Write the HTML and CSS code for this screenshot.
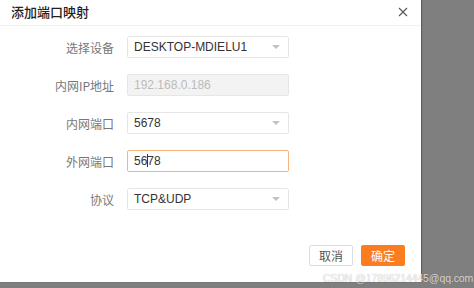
FILE: index.html
```html
<!DOCTYPE html>
<html lang="zh">
<head>
<meta charset="utf-8">
<link rel="stylesheet" href="styles.css">
</head>
<body>
<div class="stage">
  <div class="dialog">
    <div class="header">
      <span class="title">添加端口映射</span>
      <svg class="close" width="10" height="10" viewBox="0 0 10 10"><path d="M1 1L9 9M9 1L1 9" stroke="#555" stroke-width="1.1" fill="none"/></svg>
    </div>
    <div class="form">
      <div class="row">
        <label class="label">选择设备</label>
        <div class="field select"><span>DESKTOP-MDIELU1</span><i class="arrow"></i></div>
      </div>
      <div class="row">
        <label class="label">内网IP地址</label>
        <div class="field disabled"><span>192.168.0.186</span></div>
      </div>
      <div class="row">
        <label class="label">内网端口</label>
        <div class="field select"><span>5678</span><i class="arrow"></i></div>
      </div>
      <div class="row">
        <label class="label">外网端口</label>
        <div class="field focus"><span>56<b class="caret"></b>78</span></div>
      </div>
      <div class="row">
        <label class="label">协议</label>
        <div class="field select"><span>TCP&amp;UDP</span><i class="arrow"></i></div>
      </div>
    </div>
    <div class="footer">
      <button class="btn cancel">取消</button>
      <button class="btn ok">确定</button>
    </div>
  </div>
  <div class="watermark">CSDN @17896214445@qq.com</div>
</div>
</body>
</html>
```
FILE: styles.css
```css
html, body { margin: 0; padding: 0; }
body { font-family: "Liberation Sans", Arial, "Noto Sans CJK SC", sans-serif; }
.stage {
  position: relative;
  width: 474px;
  height: 288px;
  background: #7f7f7f;
  overflow: hidden;
}
.dialog {
  width: 421px;
  height: 282px;
  background: #fff;
  box-shadow: 1px 0 1px rgba(0,0,0,0.25);
  display: flex;
  flex-direction: column;
}
.header {
  height: 25px;
  border-bottom: 1px solid #f2f2f2;
  display: flex;
  align-items: center;
  justify-content: space-between;
  padding: 0 13px 0 11px;
}
.title {
  font-size: 13px;
  font-weight: 500;
  color: #222;
  font-family: "Noto Sans CJK SC", sans-serif;
  line-height: 16px;
  margin-top: -2px;
}
.close { margin-top: -1px; }
.form {
  padding-top: 10px;
  display: flex;
  flex-direction: column;
  gap: 16px;
}
.row {
  display: grid;
  grid-template-columns: 114px 162px;
  column-gap: 13px;
  align-items: center;
}
.label {
  text-align: right;
  font-size: 12px;
  color: #777;
  font-family: "Noto Sans CJK SC", sans-serif;
}
.field {
  height: 20px;
  border: 1px solid #e6e6e6;
  border-radius: 2px;
  display: flex;
  align-items: center;
  justify-content: space-between;
  padding: 0 6px 0 6px;
  font-size: 12px;
  color: #333;
}
.field.disabled { background: #f3f3f3; color: #bbb; }
.field.focus { border-color: #f9b27a; }
.arrow {
  width: 0; height: 0;
  border-left: 4px solid transparent;
  border-right: 4px solid transparent;
  border-top: 4px solid #c2c2c2;
  margin-right: 2px;
}
.caret {
  display: inline-block;
  width: 1px;
  height: 13px;
  background: #333;
  vertical-align: -2px;
  margin: 0 -1px 0 0;
}
.footer {
  margin-top: auto;
  display: flex;
  justify-content: flex-end;
  gap: 8px;
  padding: 0 16px 16px 0;
}
.btn {
  width: 44px;
  height: 21px;
  font-size: 12px;
  font-family: "Noto Sans CJK SC", sans-serif;
  border-radius: 2px;
  padding: 0;
  cursor: pointer;
}
.cancel { background: #fff; border: 1px solid #dcdcdc; color: #555; }
.ok { background: #fb7d21; border: 1px solid #fb7d21; color: #fff; }
.watermark {
  position: absolute;
  left: 323px;
  top: 272px;
  font-size: 10.5px;
  line-height: 13px;
  letter-spacing: -0.1px;
  white-space: nowrap;
  color: rgba(255,255,255,0.75);
  text-shadow: 0 0 1px rgba(0,0,0,0.3);
}
```
